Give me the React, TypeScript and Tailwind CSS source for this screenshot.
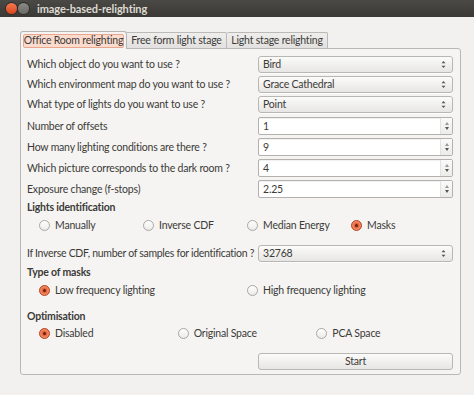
import React from 'react';

const FONT = { fontFamily: 'Lato, "Noto Sans", sans-serif' };

const Arrows = () => (
  <svg width="5" height="9" viewBox="0 0 5 9" className="shrink-0">
    <path d="M0.5 3.2 L2.5 1 L4.5 3.2 Z" fill="#555" />
    <path d="M0.5 5.8 L2.5 8 L4.5 5.8 Z" fill="#555" />
  </svg>
);

const Combo = ({ value }: { value: string }) => (
  <div className="w-[195px] shrink-0 h-full flex items-center justify-between pl-[4px] pr-[6px] rounded-[3px] border border-[#b9b7b3] bg-gradient-to-b from-[#fbfbfa] to-[#e7e6e4] shadow-[0_1px_0_rgba(255,255,255,0.8)]">
    <span>{value}</span>
    <Arrows />
  </div>
);

const Spin = ({ value }: { value: string }) => (
  <div className="w-[195px] shrink-0 h-full flex items-stretch rounded-[2px] border border-[#b3b1ad] bg-white shadow-[inset_0_1px_1px_rgba(0,0,0,0.06)]">
    <span className="flex-1 flex items-center pl-[4px]">{value}</span>
    <div className="w-[12px] flex flex-col items-center justify-center gap-[2px] border-l border-[#e3e2df] bg-gradient-to-b from-[#fafafa] to-[#ececea]">
      <svg width="4" height="3" viewBox="0 0 4 3"><path d="M0 3 L2 0 L4 3 Z" fill="#9a9a9a" /></svg>
      <svg width="4" height="3" viewBox="0 0 4 3"><path d="M0 0 L2 3 L4 0 Z" fill="#555" /></svg>
    </div>
  </div>
);

const Radio = ({ label, checked }: { label: string; checked?: boolean }) => (
  <div className="flex items-center gap-[5px] pl-[2px] whitespace-nowrap">
    {checked ? (
      <span className="w-[11px] h-[11px] shrink-0 rounded-full border border-[#b94a24] bg-[#e4673f] flex items-center justify-center shadow-[inset_0_0_0_1.5px_#f08a68]">
        <span className="w-[3px] h-[3px] rounded-full bg-[#6e1e08]" />
      </span>
    ) : (
      <span className="w-[11px] h-[11px] shrink-0 rounded-full border border-[#a9a7a3] bg-gradient-to-b from-[#ffffff] to-[#ebeae8]" />
    )}
    <span>{label}</span>
  </div>
);

const Row = ({ label, children, className }: { label: React.ReactNode; children: React.ReactNode; className: string }) => (
  <div className={`flex items-center justify-between whitespace-nowrap ${className}`}>
    <span>{label}</span>
    {children}
  </div>
);

export default function App() {
  return (
    <div className="w-[474px] h-[395px] bg-[#f2f1f0] text-[#3c3b37] text-[10.5px] tracking-[-0.2px] leading-none overflow-hidden" style={FONT}>
      {/* title bar */}
      <div className="h-[17px] flex items-center bg-gradient-to-b from-[#4a4945] to-[#3a3935]">
        <span className="ml-[6px] w-[11px] h-[11px] rounded-full bg-gradient-to-b from-[#f5794f] to-[#d9441c] shadow-[0_0_0_1px_#2e2d2a]" />
        <span className="ml-[1px] w-[11px] h-[11px] rounded-full bg-gradient-to-b from-[#8a8984] to-[#6b6a66] shadow-[0_0_0_1px_#2e2d2a]" />
        <span className="ml-[8px] font-bold text-[11px] tracking-[-0.1px] text-[#dedad2]">image-based-relighting</span>
      </div>

      <div className="pl-[20px] pr-[13px] pt-[14px]">
        {/* tabs */}
        <div className="flex items-end h-[17px] whitespace-nowrap">
          <div className="w-[107px] h-[18px] -mb-px z-10 flex items-center justify-center rounded-t-[3px] border border-b-0 border-[#b7b5b1] bg-[#f5f4f3]">
            <span className="w-[101px] h-[14px] flex items-center justify-center rounded-[2px] border border-[#eaa68c] bg-[#fadbce]">
              Office Room relighting
            </span>
          </div>
          <div className="w-[100px] h-[16px] flex items-center justify-center border border-b-0 border-l-0 border-[#bcbab6] rounded-tr-[2px] bg-gradient-to-b from-[#efeeed] to-[#e2e1df]">
            Free form light stage
          </div>
          <div className="w-[101px] h-[16px] flex items-center justify-center border border-b-0 border-l-0 border-[#bcbab6] rounded-t-[2px] bg-gradient-to-b from-[#efeeed] to-[#e2e1df]">
            Light stage relighting
          </div>
        </div>

        {/* panel */}
        <div className="h-[327px] border border-[#bab8b4] rounded-b-[3px] rounded-tr-[3px] bg-[#f5f4f3] pl-[6px] pr-[7px] pt-[7px] flex flex-col">
          <Row label="Which object do you want to use ?" className="h-[17px]">
            <Combo value="Bird" />
          </Row>
          <Row label="Which environment map do you want to use ?" className="h-[17px] mt-[3px]">
            <Combo value="Grace Cathedral" />
          </Row>
          <Row label="What type of lights do you want to use ?" className="h-[17px] mt-[3px]">
            <Combo value="Point" />
          </Row>
          <Row label="Number of offsets" className="h-[18px] mt-[4px]">
            <Spin value="1" />
          </Row>
          <Row label="How many lighting conditions are there ?" className="h-[18px] mt-[3px]">
            <Spin value="9" />
          </Row>
          <Row label="Which picture corresponds to the dark room ?" className="h-[18px] mt-[3px]">
            <Spin value="4" />
          </Row>
          <Row label="Exposure change (f-stops)" className="h-[18px] mt-[3px]">
            <Spin value="2.25" />
          </Row>

          <div className="h-[14px] mt-[2px] flex items-center font-bold">Lights identification</div>
          <div className="h-[14px] mt-[4px] ml-[10px] grid grid-cols-4 items-center">
            <Radio label="Manually" />
            <Radio label="Inverse CDF" />
            <Radio label="Median Energy" />
            <Radio label="Masks" checked />
          </div>

          <Row
            label={<span className="tracking-[-0.3px]">If Inverse CDF, number of samples for identification ?</span>}
            className="h-[17px] mt-[13px]"
          >
            <Combo value="32768" />
          </Row>

          <div className="h-[14px] mt-[3px] flex items-center font-bold">Type of masks</div>
          <div className="h-[14px] mt-[4px] ml-[10px] grid grid-cols-2 items-center">
            <Radio label="Low frequency lighting" checked />
            <Radio label="High frequency lighting" />
          </div>

          <div className="h-[14px] mt-[12px] flex items-center font-bold">Optimisation</div>
          <div className="h-[14px] mt-[3px] ml-[10px] grid grid-cols-3 items-center">
            <Radio label="Disabled" checked />
            <Radio label="Original Space" />
            <Radio label="PCA Space" />
          </div>

          <div className="h-[17px] mt-[13px] flex justify-end">
            <div className="w-[195px] h-full flex items-center justify-center rounded-[3px] border border-[#b9b7b3] bg-gradient-to-b from-[#fbfbfa] to-[#e7e6e4]">
              Start
            </div>
          </div>
        </div>
      </div>
    </div>
  );
}
